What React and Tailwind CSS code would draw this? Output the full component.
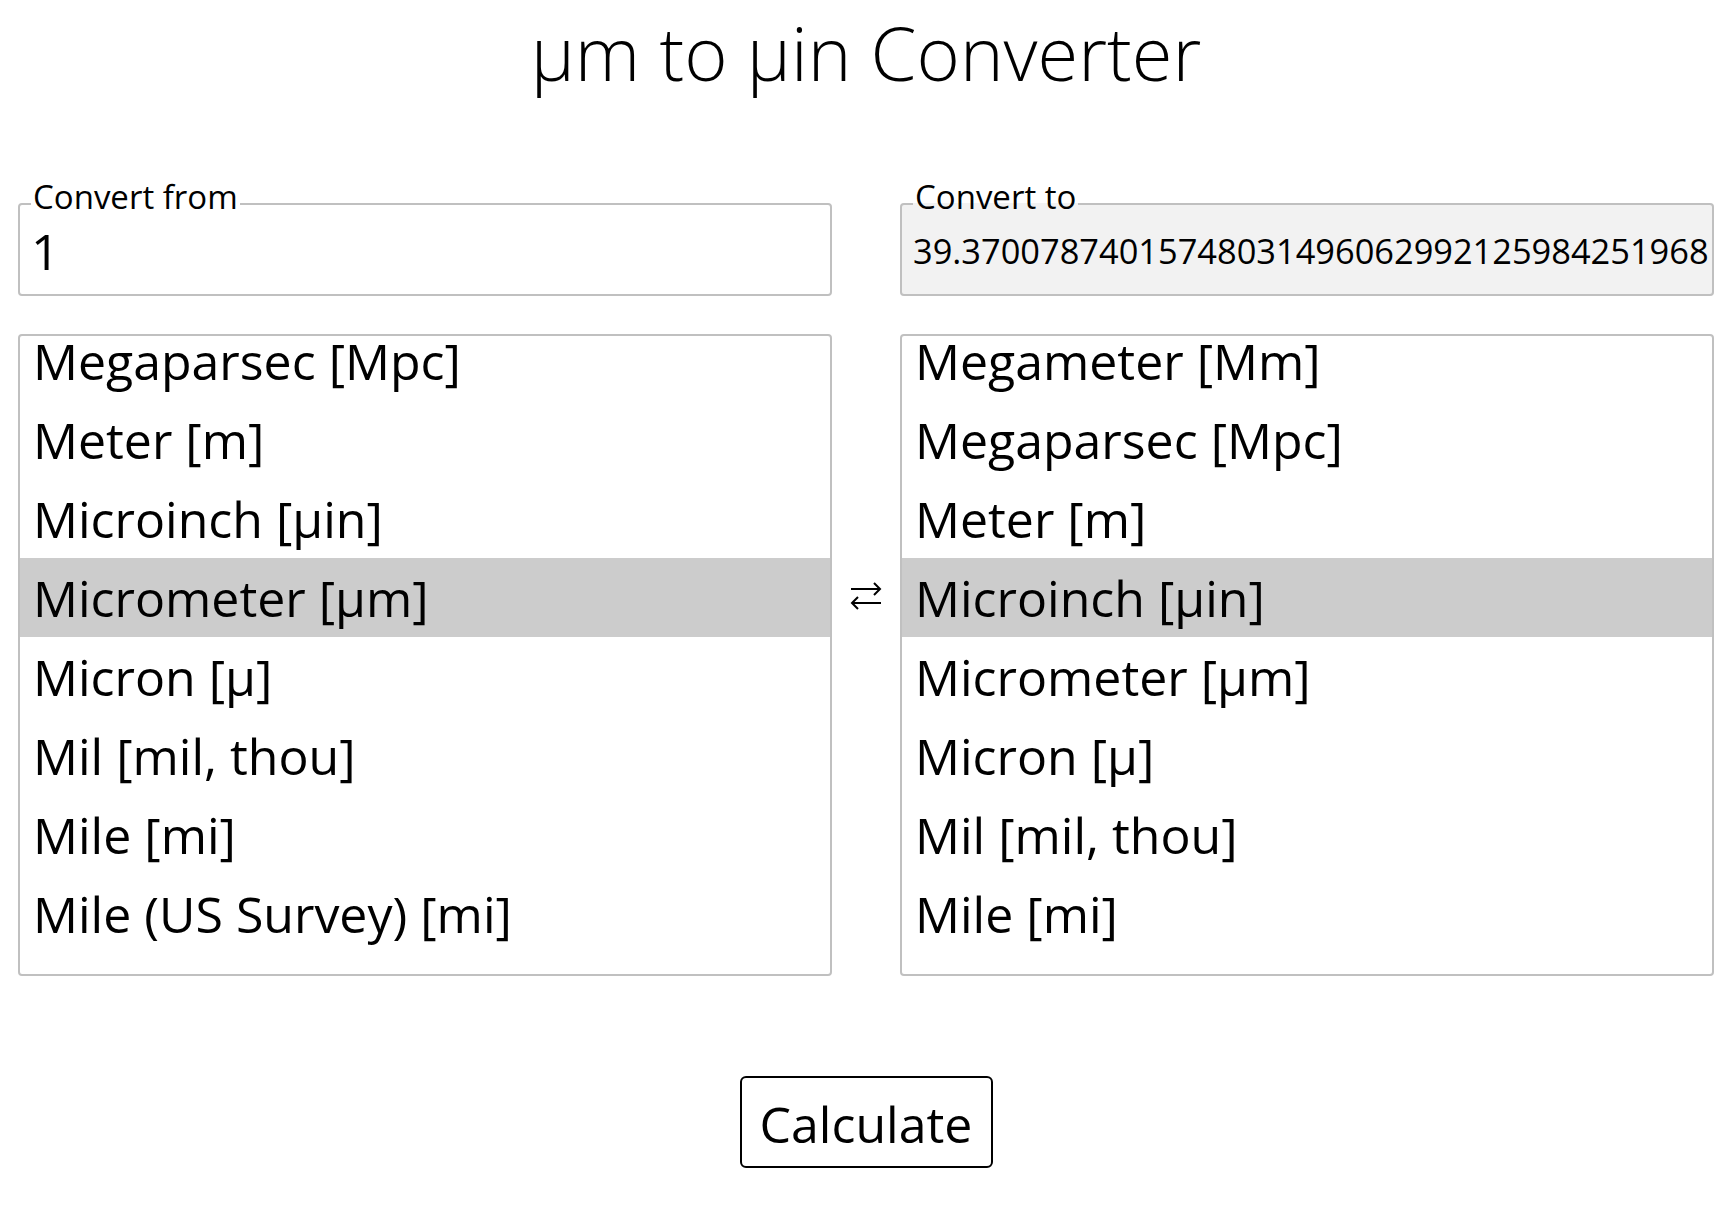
import { useState } from 'react';

const fromUnits = [
  'Megaparsec [Mpc]',
  'Meter [m]',
  'Microinch [µin]',
  'Micrometer [µm]',
  'Micron [µ]',
  'Mil [mil, thou]',
  'Mile [mi]',
  'Mile (US Survey) [mi]',
];

const toUnits = [
  'Megameter [Mm]',
  'Megaparsec [Mpc]',
  'Meter [m]',
  'Microinch [µin]',
  'Micrometer [µm]',
  'Micron [µ]',
  'Mil [mil, thou]',
  'Mile [mi]',
];

// list is scrolled a little, so the first row shows only its lower part
function UnitList({ items, selected }) {
  return (
    <div className="h-[642px] min-w-0 overflow-hidden rounded-[4px] border-2 border-[#c0c0c0] bg-white">
      <ul>
        {items.map((u, i) => (
          <li key={u}
            className={`whitespace-nowrap pl-[13px] text-[50px] ${i === 0 ? 'h-[64px] leading-[50px]' : 'h-[79px] pt-[1px] leading-[78px]'} ${u === selected ? 'bg-[#cccccc]' : ''}`}>
            {u}
          </li>
        ))}
      </ul>
    </div>
  );
}

function SwapArrows() {
  return (
    <svg width="32" height="28" viewBox="0 0 32 28" fill="none" stroke="#000" strokeWidth="2">
      <path d="M1 7H30M24 1L30 7L24 13" />
      <path d="M2 21H31M8 15L2 21L8 27" />
    </svg>
  );
}

export default function App() {
  const [value] = useState('1');

  return (
    <div className="min-h-[1210px] w-full bg-white font-['Open_Sans',sans-serif] text-black">
      <h1 className="pt-[16px] text-center text-[74px] font-light leading-none">
        µm to µin Converter
      </h1>

      <div className="mt-[90px] grid grid-cols-[minmax(0,1fr)_68px_minmax(0,1fr)] px-[18px]">
        {/* Convert from */}
        <fieldset className="min-w-0 rounded-[4px] border-2 border-[#c0c0c0] px-[11px]">
          <legend className="px-[2px] pb-[15px] text-[33px] leading-none">Convert from</legend>
          <div className="h-[66px] text-[50px] leading-[47px]">{value}</div>
        </fieldset>
        <div />
        {/* Convert to */}
        <fieldset className="min-w-0 rounded-[4px] border-2 border-[#c0c0c0] bg-[#f2f2f2] pl-[11px]">
          <legend className="px-[2px] pb-[15px] text-[33px] leading-none">Convert to</legend>
          <div className="h-[66px] overflow-hidden whitespace-nowrap text-[34.4px] leading-[45px]">
            39.37007874015748031496062992125984251968
          </div>
        </fieldset>

        <div className="col-span-3 h-[38px]" />

        <UnitList items={fromUnits} selected="Micrometer [µm]" />
        <div className="flex justify-center pt-[248px]">
          <div><SwapArrows /></div>
        </div>
        <UnitList items={toUnits} selected="Microinch [µin]" />
      </div>

      <div className="mt-[100px] flex justify-center">
        <button className="h-[92px] w-[253px] rounded-[6px] border-2 border-black bg-white pt-[4px] text-[50px] leading-none">
          Calculate
        </button>
      </div>
    </div>
  );
}
